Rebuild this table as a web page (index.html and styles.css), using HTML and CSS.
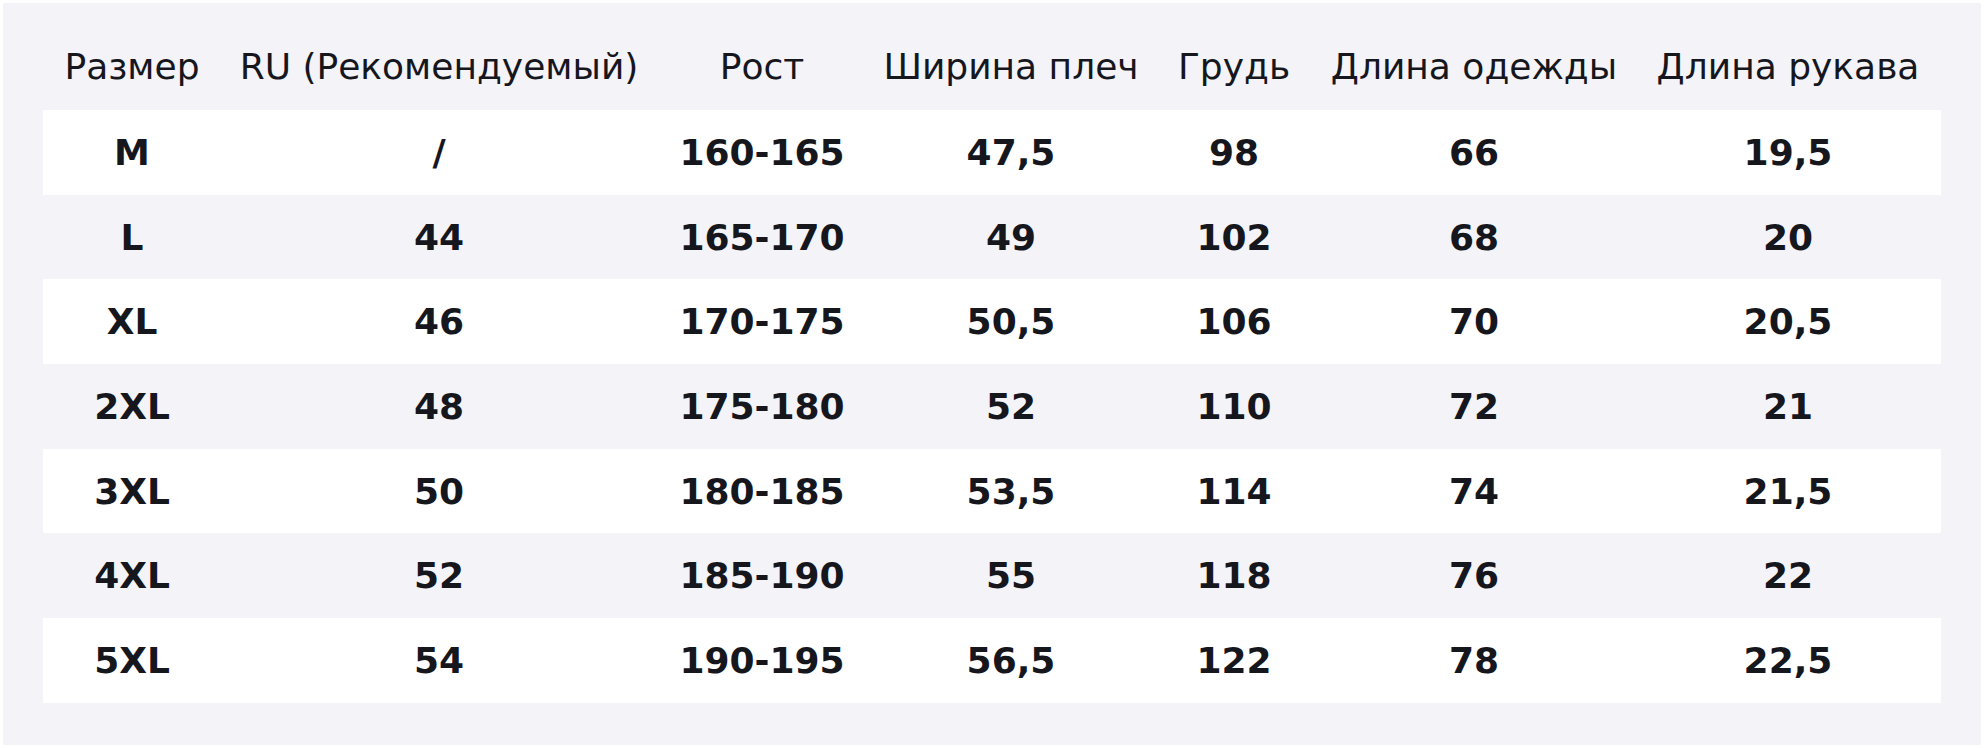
FILE: index.html
```html
<!DOCTYPE html>
<html lang="ru">
<head>
<meta charset="utf-8">
<title>Таблица размеров</title>
<link rel="stylesheet" href="styles.css">
</head>
<body>
<div class="panel">
  <table class="sizes">
    <colgroup>
      <col class="c1"><col class="c2"><col class="c3"><col class="c4"><col class="c5"><col class="c6"><col class="c7">
    </colgroup>
    <thead>
      <tr>
        <th>Размер</th><th>RU (Рекомендуемый)</th><th>Рост</th><th>Ширина плеч</th><th>Грудь</th><th>Длина одежды</th><th>Длина рукава</th>
      </tr>
    </thead>
    <tbody>
      <tr class="odd"><td>M</td><td>/</td><td>160-165</td><td>47,5</td><td>98</td><td>66</td><td>19,5</td></tr>
      <tr><td>L</td><td>44</td><td>165-170</td><td>49</td><td>102</td><td>68</td><td>20</td></tr>
      <tr class="odd"><td>XL</td><td>46</td><td>170-175</td><td>50,5</td><td>106</td><td>70</td><td>20,5</td></tr>
      <tr><td>2XL</td><td>48</td><td>175-180</td><td>52</td><td>110</td><td>72</td><td>21</td></tr>
      <tr class="odd"><td>3XL</td><td>50</td><td>180-185</td><td>53,5</td><td>114</td><td>74</td><td>21,5</td></tr>
      <tr><td>4XL</td><td>52</td><td>185-190</td><td>55</td><td>118</td><td>76</td><td>22</td></tr>
      <tr class="odd"><td>5XL</td><td>54</td><td>190-195</td><td>56,5</td><td>122</td><td>78</td><td>22,5</td></tr>
    </tbody>
  </table>
</div>
</body>
</html>
```

FILE: styles.css
```css
html, body {
  margin: 0;
  padding: 0;
  background: #ffffff;
}

body {
  width: 1984px;
  height: 748px;
  padding: 3px;
  box-sizing: border-box;
  font-family: "DejaVu Sans", "Liberation Sans", sans-serif;
  color: #16161d;
}

.panel {
  width: 1978px;
  height: 742px;
  box-sizing: border-box;
  background: #f3f3f8;
  padding: 20px 40px 42px 40px;
}

.sizes {
  width: 1898px;
  border-collapse: collapse;
  border-spacing: 0;
  table-layout: fixed;
}

.c1 { width: 178px; }
.c2 { width: 436px; }
.c3 { width: 210px; }
.c4 { width: 288px; }
.c5 { width: 158px; }
.c6 { width: 322px; }
.c7 { width: 306px; }

.sizes th {
  height: 87px;
  padding: 0;
  font-size: 36px;
  font-weight: normal;
  text-align: center;
  vertical-align: middle;
  white-space: nowrap;
}

.sizes td {
  height: 84.7px;
  padding: 0;
  font-size: 36px;
  font-weight: bold;
  text-align: center;
  vertical-align: middle;
  white-space: nowrap;
}

.sizes tr.odd td {
  background: #ffffff;
}
```
